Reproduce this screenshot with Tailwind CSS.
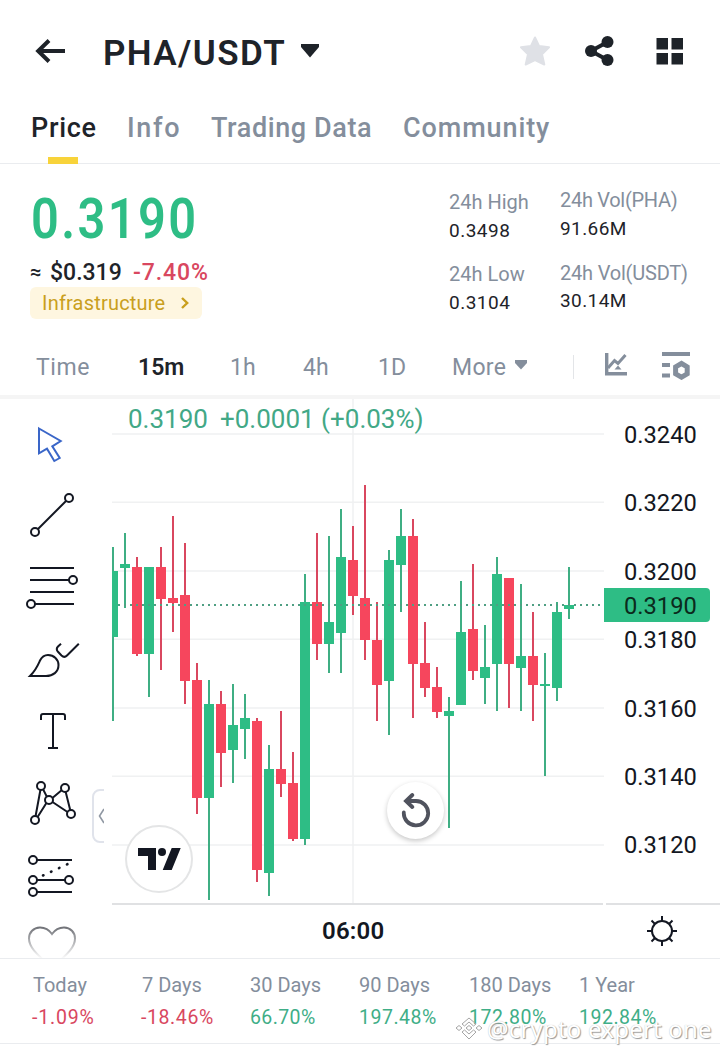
<!DOCTYPE html>
<html lang="en">
<head>
  <meta charset="UTF-8" />
  <meta name="viewport" content="width=device-width, initial-scale=1.0" />
  <title>PHA/USDT</title>
  <script src="https://cdn.jsdelivr.net/npm/@tailwindcss/browser@4"></script>
</head>
<body class="w-[720px] h-[1052px] overflow-hidden bg-white font-['Roboto',sans-serif] text-[#1e2329]">

  <!-- Header -->
  <header class="flex items-center h-[102px] pl-[35px] pr-[36px]">
    <svg class="w-[31px] h-[24px]" viewBox="0 0 31 24" fill="none" stroke="#1e2329" stroke-width="4">
      <path d="M30 12H3M14 1.5L3.2 12L14 22.5" />
    </svg>
    <h1 class="ml-[37px] pt-1 w-[181px] text-[35px] leading-none font-semibold tracking-[1.4px] whitespace-nowrap">PHA/USDT</h1>
    <svg class="ml-[17px] w-[18px] h-[14px]" viewBox="0 0 18 14" fill="#1e2329"><path d="M0 0H18V3L9 13.5L0 3Z" /></svg>
    <div class="ml-auto flex items-center">
      <svg class="w-[30px] h-[30px]" viewBox="0 0 30 30" fill="#dfe1e6" stroke="#dfe1e6" stroke-width="2" stroke-linejoin="round">
        <path d="M15 1.5L19 10L29 11.3L22 18.3L24.3 28.5L15 24L5.7 28.5L8 18.3L1 11.3L11 10Z" />
      </svg>
      <svg class="ml-[34px] w-[31px] h-[30px]" viewBox="0 0 31 30" fill="#1e2329">
        <path d="M7 15L23.5 6M7 15L23.5 24" stroke="#1e2329" stroke-width="4" />
        <circle cx="7" cy="15" r="6" /><circle cx="23.5" cy="6" r="6" /><circle cx="23.5" cy="24" r="6" />
      </svg>
      <svg class="ml-[41px] w-[28px] h-[27px]" viewBox="0 0 28 27" fill="#1e2329">
        <path d="M0.5 0H12V11.5H0.5ZM15.5 0H27V11.5H15.5ZM0.5 15H12V26.5H0.5ZM15.5 15H27V26.5H15.5Z" />
      </svg>
    </div>
  </header>

  <!-- Tabs -->
  <nav class="flex h-[62px] pl-[31px] border-b border-[#eaecef] text-[27px] leading-[52px] font-medium text-[#848e9c] whitespace-nowrap">
    <div class="w-[96px] tracking-[0.7px] text-[#1e2329]">
      Price
      <div class="ml-[17px] mt-[3px] w-[30px] h-[7px] bg-[#f8d33a]"></div>
    </div>
    <div class="w-[84px] tracking-[1.7px]">Info</div>
    <div class="w-[192px] tracking-[0.6px]">Trading Data</div>
    <div class="tracking-[0.9px]">Community</div>
  </nav>

  <!-- Price and 24h numbers -->
  <section class="flex h-[174px] pl-[30px]">
    <div class="w-[420px]">
      <div class="h-[90px] pt-[25px] pl-px">
        <span class="inline-block origin-left scale-x-[0.87] text-[56px] leading-[60px] font-semibold tracking-[2.8px] text-[#2ebd85]">0.3190</span>
      </div>
      <div class="flex h-[33px] text-[23px] leading-[37px] font-medium">
        <span class="w-[20px] text-[20px]">≈</span>
        <span class="w-[83px]">$0.319</span>
        <span class="tracking-[0.9px] text-[#d9475f]">-7.40%</span>
      </div>
      <div class="flex items-center w-[172px] h-[32px] pl-[12px] rounded-md bg-[#fef6e0] text-[20px] tracking-[0.2px] text-[#c99f1d]">
        Infrastructure
        <svg class="ml-[16px] w-[8px] h-[12px]" viewBox="0 0 8 12" fill="none" stroke="#c99f1d" stroke-width="2.4"><path d="M1 1L6.2 6L1 11" /></svg>
      </div>
    </div>
    <div class="w-[110px] -ml-px mr-px pt-[24px] text-[20px] leading-[28px] whitespace-nowrap">
      <div class="text-[#848e9c]">24h High</div>
      <div class="mb-4 pt-px h-[28px] text-[19px] tracking-[0.5px]">0.3498</div>
      <div class="text-[#848e9c]">24h Low</div>
      <div class="pt-px text-[19px] tracking-[0.5px]">0.3104</div>
    </div>
    <div class="pt-[22px] text-[20px] leading-[28px] whitespace-nowrap">
      <div class="tracking-[-0.3px] text-[#848e9c]">24h Vol(PHA)</div>
      <div class="mb-[17px] pt-px h-[28px] text-[19px] tracking-[0.4px]">91.66M</div>
      <div class="tracking-[-0.2px] text-[#848e9c]">24h Vol(USDT)</div>
      <div class="text-[19px] tracking-[0.4px]">30.14M</div>
    </div>
  </section>

  <!-- Intervals -->
  <div class="flex items-center h-[61px] pl-[36px] border-b-4 border-[#f5f5f5] text-[23px] text-[#848e9c]">
    <span class="pt-[3px] w-[102px] tracking-[0.6px]">Time</span>
    <span class="pt-[3px] w-[92px] font-semibold text-[#1e2329]">15m</span>
    <span class="pt-[3px] w-[73px]">1h</span>
    <span class="pt-[3px] w-[75px]">4h</span>
    <span class="pt-[3px] w-[74px]">1D</span>
    <span class="pt-[3px] w-[63px] tracking-[0.3px]">More</span>
    <svg class="w-[12px] h-[10px] mb-1" viewBox="0 0 12 10" fill="#848e9c"><path d="M0 0H12V3L6 9.5L0 3Z" /></svg>
    <span class="ml-[46px] w-px h-[24px] bg-[#e3e5e8]"></span>
    <svg class="ml-[31px] mb-1 w-[22px] h-[23px]" viewBox="0 0 22 23" fill="none" stroke="#848e9c" stroke-width="3.4">
      <path d="M1.7 0V20.8H22" /><path d="M3 15L9.5 7.5L13 10.5L20.5 2" stroke-width="3" /><path d="M9.5 16.5L13 12.5L16.5 16.5Z" fill="#848e9c" stroke="none" />
    </svg>
    <svg class="ml-[35px] mb-[2px] w-[28px] h-[28px]" viewBox="0 0 28 28">
      <path d="M0 0H28V4H0ZM0 11H8V15H0ZM0 21.5H8V25.5H0Z" fill="#848e9c" />
      <path d="M19.5 11.5L25.2 14.9V21.9L19.5 25.2L13.6 21.9V14.9Z" fill="none" stroke="#848e9c" stroke-width="5" />
    </svg>
  </div>

  <!-- Chart -->
  <main class="flex h-[560px] border-b border-[#eaecef]">
    <!-- Drawing tools, one 72px cell each -->
    <aside class="relative w-[104px] pt-[9px] overflow-hidden">
      <svg class="block w-[104px] h-[72px]" viewBox="0 0 104 72" fill="none" stroke="#3a66c8" stroke-width="2">
        <path d="M39 20.5L60.7 33L52.3 38.3L59.7 50L54.3 53L47 40.7L39 45.3Z" />
      </svg>
      <svg class="block w-[104px] h-[72px]" viewBox="0 0 104 72" fill="none" stroke="#131722" stroke-width="2">
        <path d="M38 49L66 21" /><circle cx="69" cy="18" r="4" /><circle cx="35" cy="52" r="4" />
      </svg>
      <svg class="block w-[104px] h-[72px]" viewBox="0 0 104 72" fill="none" stroke="#131722" stroke-width="2">
        <path d="M30 16H74M30 28H69M30 40H74M35 52H74" /><circle cx="73" cy="28" r="4" /><circle cx="31" cy="52" r="4" />
      </svg>
      <svg class="block w-[104px] h-[72px]" viewBox="0 0 104 72" fill="none" stroke="#131722" stroke-width="2">
        <path d="M30 52C36 46 38 41 40 36.5C42 32.5 45 31 48 31C54 31 58.5 35.5 58.5 41C58.5 48 53 52 46 52Z" />
        <path d="M61 19.7L58 22.5C56.5 24 56.5 26 58 27.8L61.5 31.5C63.3 33.2 65.3 33.2 67 31.5L78.8 19.8" />
      </svg>
      <svg class="block w-[104px] h-[72px]" viewBox="0 0 104 72" fill="none" stroke="#131722" stroke-width="2">
        <path d="M41 24V20Q41 18 43 18H63Q65 18 65 20V24M53 18V52M48 52H58" />
      </svg>
      <svg class="block w-[104px] h-[72px]" viewBox="0 0 104 72" fill="none" stroke="#131722" stroke-width="2">
        <path d="M35.6 48L40.4 22M43.2 21.5L46.8 28.6M52.4 30L61.6 22.2M65.7 24L70.2 42M67.5 44L52.5 34M46.4 35L37.6 49" />
        <circle cx="41" cy="18" r="4" /><circle cx="65" cy="20" r="4" /><circle cx="49" cy="32" r="4" /><circle cx="71" cy="46" r="4" /><circle cx="35" cy="52" r="4" />
      </svg>
      <svg class="block w-[104px] h-[72px]" viewBox="0 0 104 72" fill="none" stroke="#131722" stroke-width="2">
        <path d="M37 20H72M37 40H65M37 52H72" />
        <path d="M43 35.5L70 23" stroke-width="2.6" stroke-linecap="round" stroke-dasharray="0.5 8.3" />
        <circle cx="33" cy="20" r="4" /><circle cx="33" cy="40" r="4" /><circle cx="69" cy="40" r="4" /><circle cx="33" cy="52" r="4" />
      </svg>
      <svg class="block w-[104px] h-[72px]" viewBox="0 0 104 72" fill="none" stroke="url(#fade)" stroke-width="2">
        <defs><linearGradient id="fade" gradientUnits="userSpaceOnUse" x1="0" y1="14" x2="0" y2="46"><stop stop-color="#6b6d73" /><stop offset="1" stop-color="#fafafa" /></linearGradient></defs>
        <path d="M52 22C48.5 17 44 15.5 40 15.5C33.5 15.5 29 20.5 29 26.5C29 36 38 43 52 56C66 43 75 36 75 26.5C75 20.5 70.5 15.5 64 15.5C60 15.5 55.5 17 52 22Z" />
      </svg>
      <!-- Collapse handle -->
      <div class="absolute left-[92px] top-[390px] w-[16px] h-[54px] border-2 border-[#e0e3eb] rounded-l-lg">
        <svg class="absolute left-[4px] top-[17px] w-[7px] h-[16px]" viewBox="0 0 7 16" fill="none" stroke="#9098a3" stroke-width="1.6"><path d="M6 1L1.5 8L6 15" /></svg>
      </div>
    </aside>

    <div class="flex-1">
      <div class="flex">
        <!-- Plot -->
        <div class="relative w-[500px] h-[506px]">
          <svg class="block w-[500px] h-[506px]" viewBox="104 399 500 506">
            <path d="M112 434H604M112 502.3H604M112 571H604M112 639.3H604M112 708H604M112 776.3H604M112 845H604M353 399V904" stroke="#f0f1f2" stroke-width="1.5" />
            <g id="candles"></g>
            <path d="M118 605H604" stroke="#4f9f83" stroke-width="2" stroke-dasharray="2 4" />
            <path d="M112 904H603" stroke="#e0e1e3" stroke-width="2" />
          </svg>
          <div class="absolute left-[24px] top-[3px] text-[26px] leading-[34px] text-[#42a886] whitespace-pre"><span class="inline-block w-[92px]">0.3190</span>+0.0001 (+0.03%)</div>
          <!-- TradingView badge -->
          <div class="absolute left-[21px] top-[426px] flex items-center justify-center w-[68px] h-[68px] rounded-full border-2 border-[#e4e5e6] bg-white">
            <svg class="w-[43px] h-[22px]" viewBox="0 0 43 22" fill="#131722"><path d="M0 0H18V22H10V8H0ZM33.7 0H42.7L33.7 22H24.7Z" /><circle cx="24" cy="4" r="4" /></svg>
          </div>
          <!-- Reset button -->
          <div class="absolute left-[283px] top-[383px] flex items-center justify-center w-[57px] h-[57px] rounded-full bg-white shadow-[0_2px_5px_rgba(0,0,0,0.22)]">
            <svg class="w-[36px] h-[36px]" viewBox="398 793 36 36" fill="none" stroke="#50535e" stroke-width="3.8" stroke-linecap="round">
              <path d="M403.8 812.5A12.2 12.2 0 1 0 416 801H407M412.3 795L406 801L412.3 807" />
            </svg>
          </div>
        </div>
        <!-- Price axis -->
        <div class="relative flex-1 h-[506px] pl-[20px] pt-[2px] text-[23.7px] leading-[68.4px] text-[#131722]">
          <div>0.3240</div>
          <div>0.3220</div>
          <div>0.3200</div>
          <div>0.3180</div>
          <div>0.3160</div>
          <div>0.3140</div>
          <div>0.3120</div>
          <div class="absolute left-0 top-[189px] w-[106px] h-[34px] pl-[20px] rounded-r bg-[#2ebd85] leading-[36px] text-[#0b2a1c]">0.3190</div>
          <div class="absolute left-[2px] right-0 bottom-0 h-[2px] bg-[#e0e1e3]"></div>
        </div>
      </div>
      <!-- Time axis -->
      <div class="flex items-center h-[52px] pl-[218px] pr-[43px] text-[24px] font-semibold tracking-[0.2px] text-[#131722]">
        06:00
        <svg class="ml-auto w-[30px] h-[30px]" viewBox="-15 -15 30 30" fill="none" stroke="#131722" stroke-width="2">
          <circle r="10" />
          <path d="M0 -15V-10M0 15V10M-15 0H-10M15 0H10M-10.5 -10.5L-7 -7M10.5 -10.5L7 -7M-10.5 10.5L-7 7M10.5 10.5L7 7" />
        </svg>
      </div>
    </div>
  </main>

  <!-- Performance -->
  <footer class="relative h-[85px] border-b border-[#eaecef] pt-[10px] pl-[33px] text-[20px] leading-[32px] whitespace-nowrap">
    <div class="grid grid-cols-[109px_108px_109px_110px_110px_1fr] text-[#848e9c]">
      <span>Today</span><span>7 Days</span><span>30 Days</span><span>90 Days</span><span>180 Days</span><span>1 Year</span>
    </div>
    <div class="grid grid-cols-[109px_108px_109px_110px_110px_1fr] pt-px text-[19.5px] tracking-[0.5px] text-[#3fae87]">
      <span class="-ml-px text-[#d9475f] tracking-[0.8px]">-1.09%</span><span class="-ml-px text-[#d9475f] tracking-[0.6px]">-18.46%</span><span class="tracking-[0.4px]">66.70%</span><span>197.48%</span><span>172.80%</span><span>192.84%</span>
    </div>
    <!-- Watermark -->
    <div class="absolute left-[455px] top-[55px] flex items-center text-white font-['Noto_Sans',sans-serif] text-[24px] tracking-[0.2px] leading-[30px] [text-shadow:1px_1px_1px_#999,0_0_1px_#bbb]">
      <svg class="w-[28px] h-[24px] mr-[4px]" viewBox="0 0 28 24" fill="none" stroke="#a5a5a5" stroke-width="1">
        <path d="M7 7L14 1L21 7L18.5 9L14 5L9.5 9ZM1 11L4 8.5L7 11L4 13.5ZM21 11L24 8.5L27 11L24 13.5ZM11 11L14 8.5L17 11L14 13.5ZM7 15L9.5 13L14 17L18.5 13L21 15L14 22Z" />
      </svg>
      @crypto expert one
    </div>
  </footer>

  <script>
    // [high, open/close top, open/close bottom, low, up]
    const candles = [
      [547, 571, 637, 721, 1], [533, 564, 568, 608, 1], [557, 567, 654, 656, 0], [567, 567, 654, 697, 1],
      [547, 567, 599, 670, 0], [516, 598, 603, 632, 0], [543, 595, 681, 704, 0], [663, 680, 798, 814, 0],
      [680, 704, 798, 900, 1], [691, 704, 753, 787, 0], [684, 725, 750, 783, 1], [694, 718, 729, 759, 1],
      [718, 721, 870, 882, 0], [745, 769, 873, 896, 1], [711, 769, 784, 797, 0], [752, 783, 839, 841, 0],
      [574, 602, 839, 845, 1], [533, 602, 644, 660, 0], [536, 622, 644, 673, 1], [509, 557, 633, 673, 1],
      [526, 560, 596, 615, 0], [485, 598, 640, 660, 0], [602, 640, 685, 721, 0], [550, 560, 681, 735, 1],
      [509, 536, 565, 612, 1], [519, 536, 664, 718, 0], [622, 663, 688, 697, 0], [667, 687, 712, 718, 0],
      [697, 711, 716, 828, 1], [581, 632, 705, 705, 1], [564, 629, 671, 680, 0], [625, 667, 678, 704, 1],
      [557, 574, 664, 711, 1], [578, 578, 664, 708, 0], [584, 656, 668, 711, 1], [612, 656, 685, 721, 0],
      [653, 684, 686, 776, 1], [602, 612, 688, 701, 1], [567, 605, 609, 619, 1]
    ];
    document.getElementById("candles").innerHTML = candles.map(function (c, i) {
      const x = 113 + i * 12;
      // the first candle is cut by the left edge of the plot
      const left = i === 0 ? 112 : x - 5;
      return `<rect x="${x - 1}" y="${c[0]}" width="2" height="${c[3] - c[0]}" fill="${c[4] ? "#3fae83" : "#d9475f"}"/>` +
        `<rect x="${left}" y="${c[1]}" width="${x + 5 - left}" height="${c[2] - c[1]}" fill="${c[4] ? "#2ebd85" : "#f6465d"}"/>`;
    }).join("");
  </script>
</body>
</html>
